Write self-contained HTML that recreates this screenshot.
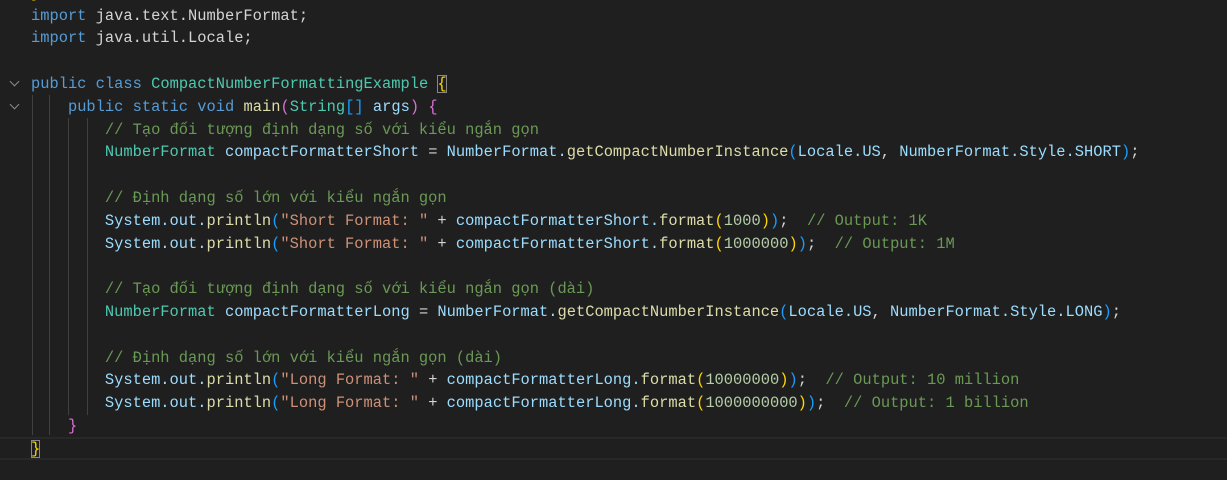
<!DOCTYPE html>
<html><head><meta charset="utf-8"><style>
html,body{margin:0;padding:0;background:#1f1f1f;width:1227px;height:480px;overflow:hidden}
.l{position:absolute;left:31px;height:22.8px;line-height:22.8px;white-space:pre;font-family:"Liberation Mono",monospace;font-size:15.4px;color:#d4d4d4;padding-top:1px}
.k{color:#569cd6}.c{color:#4ec9b0}.f{color:#dcdcaa}.v{color:#9cdcfe}.s{color:#ce9178}.m{color:#6a9955}.n{color:#b5cea8}
.g{color:#ffd700}.p{color:#da70d6}.b{color:#179fff}
.guide{position:absolute;width:1px;background:#404040}
.chev{position:absolute;left:11px;width:6px;height:6px;border-right:1.3px solid #8a8a8a;border-bottom:1.3px solid #8a8a8a;transform:rotate(45deg)}
</style></head><body>
<div style="position:absolute;left:0;top:437px;width:1227px;height:23px;border-top:2px solid #282828;border-bottom:2px solid #282828;box-sizing:border-box"></div>
<div class="guide" style="left:32px;top:95px;height:340px"></div>
<div class="guide" style="left:49px;top:95px;height:340px"></div>
<div class="guide" style="left:68px;top:118px;height:297px"></div>
<div class="guide" style="left:87px;top:118px;height:297px"></div>
<div class="chev" style="top:78px"></div>
<div class="chev" style="top:101px"></div>
<div class="l" style="top:-19px"><span class="g">}</span></div>
<div class="l" style="top:3.6px"><span class="k">import</span> java.text.NumberFormat;</div>
<div class="l" style="top:26.4px"><span class="k">import</span> java.util.Locale;</div>
<div class="l" style="top:72px"><span class="k">public</span> <span class="k">class</span> <span class="c">CompactNumberFormattingExample</span> <span class="g" style="outline:1px solid #888;outline-offset:-1px">{</span></div>
<div class="l" style="top:94.8px">    <span class="k">public</span> <span class="k">static</span> <span class="k">void</span> <span class="f">main</span><span class="p">(</span><span class="c">String</span><span class="b">[]</span> <span class="v">args</span><span class="p">)</span> <span class="p">{</span></div>
<div class="l" style="top:117.6px">        <span class="m">// Tạo đối tượng định dạng số với kiểu ngắn gọn</span></div>
<div class="l" style="top:140.4px">        <span class="c">NumberFormat</span> <span class="v">compactFormatterShort</span> = <span class="v">NumberFormat.</span><span class="f">getCompactNumberInstance</span><span class="b">(</span><span class="v">Locale.US</span>, <span class="v">NumberFormat.Style.SHORT</span><span class="b">)</span>;</div>
<div class="l" style="top:186px">        <span class="m">// Định dạng số lớn với kiểu ngắn gọn</span></div>
<div class="l" style="top:208.8px">        <span class="v">System.out.</span><span class="f">println</span><span class="b">(</span><span class="s">"Short Format: "</span> + <span class="v">compactFormatterShort.</span><span class="f">format</span><span class="g">(</span><span class="n">1000</span><span class="g">)</span><span class="b">)</span>;  <span class="m">// Output: 1K</span></div>
<div class="l" style="top:231.6px">        <span class="v">System.out.</span><span class="f">println</span><span class="b">(</span><span class="s">"Short Format: "</span> + <span class="v">compactFormatterShort.</span><span class="f">format</span><span class="g">(</span><span class="n">1000000</span><span class="g">)</span><span class="b">)</span>;  <span class="m">// Output: 1M</span></div>
<div class="l" style="top:277.2px">        <span class="m">// Tạo đối tượng định dạng số với kiểu ngắn gọn (dài)</span></div>
<div class="l" style="top:300px">        <span class="c">NumberFormat</span> <span class="v">compactFormatterLong</span> = <span class="v">NumberFormat.</span><span class="f">getCompactNumberInstance</span><span class="b">(</span><span class="v">Locale.US</span>, <span class="v">NumberFormat.Style.LONG</span><span class="b">)</span>;</div>
<div class="l" style="top:345.6px">        <span class="m">// Định dạng số lớn với kiểu ngắn gọn (dài)</span></div>
<div class="l" style="top:368.4px">        <span class="v">System.out.</span><span class="f">println</span><span class="b">(</span><span class="s">"Long Format: "</span> + <span class="v">compactFormatterLong.</span><span class="f">format</span><span class="g">(</span><span class="n">10000000</span><span class="g">)</span><span class="b">)</span>;  <span class="m">// Output: 10 million</span></div>
<div class="l" style="top:391.2px">        <span class="v">System.out.</span><span class="f">println</span><span class="b">(</span><span class="s">"Long Format: "</span> + <span class="v">compactFormatterLong.</span><span class="f">format</span><span class="g">(</span><span class="n">1000000000</span><span class="g">)</span><span class="b">)</span>;  <span class="m">// Output: 1 billion</span></div>
<div class="l" style="top:414px">    <span class="p">}</span></div>
<div class="l" style="top:436.8px"><span class="g" style="outline:1px solid #888;outline-offset:-1px">}</span></div>
</body></html>
